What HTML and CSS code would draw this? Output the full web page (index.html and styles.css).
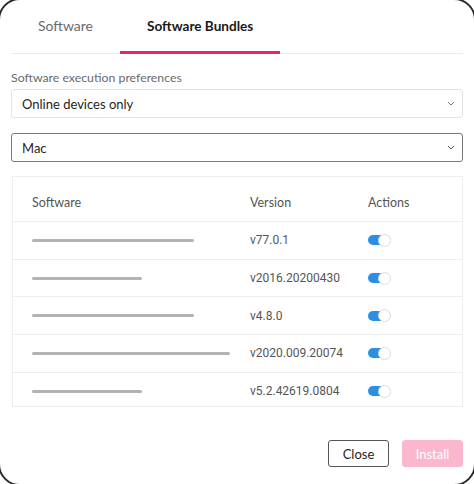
FILE: index.html
```html
<!DOCTYPE html>
<html lang="en">
<head>
<meta charset="utf-8">
<title>Software Bundles</title>
<link rel="stylesheet" href="styles.css">
</head>
<body>
<div class="modal">
  <div class="tabs">
    <div class="tab">Software</div>
    <div class="tab active">Software Bundles</div>
  </div>

  <div class="field-label">Software execution preferences</div>
  <div class="select">
    <span>Online devices only</span>
    <svg class="chev" width="8" height="5" viewBox="0 0 8 5"><path d="M1 1l3 3 3-3" fill="none" stroke="#777" stroke-width="1"/></svg>
  </div>
  <div class="select dark">
    <span>Mac</span>
    <svg class="chev" width="8" height="5" viewBox="0 0 8 5"><path d="M1 1l3 3 3-3" fill="none" stroke="#555" stroke-width="1"/></svg>
  </div>

  <div class="table">
    <div class="row head">
      <div>Software</div>
      <div>Version</div>
      <div>Actions</div>
    </div>
    <div class="row">
      <div><span class="bar" style="width:162px"></span></div>
      <div class="ver">v77.0.1</div>
      <div><span class="toggle"></span></div>
    </div>
    <div class="row">
      <div><span class="bar" style="width:110px"></span></div>
      <div class="ver">v2016.20200430</div>
      <div><span class="toggle"></span></div>
    </div>
    <div class="row">
      <div><span class="bar" style="width:162px"></span></div>
      <div class="ver">v4.8.0</div>
      <div><span class="toggle"></span></div>
    </div>
    <div class="row">
      <div><span class="bar" style="width:198px"></span></div>
      <div class="ver">v2020.009.20074</div>
      <div><span class="toggle"></span></div>
    </div>
    <div class="row">
      <div><span class="bar" style="width:110px"></span></div>
      <div class="ver">v5.2.42619.0804</div>
      <div><span class="toggle"></span></div>
    </div>
  </div>

  <div class="footer">
    <button class="btn">Close</button>
    <button class="btn primary">Install</button>
  </div>
</div>
</body>
</html>
```

FILE: styles.css
```css
html, body {
  margin: 0;
  padding: 0;
  background: #ffffff;
  overflow: hidden;
}

.modal {
  box-sizing: border-box;
  width: 478px;
  height: 488px;
  margin: -2px;
  border: 2px solid #2a2a2a;
  border-radius: 22px;
  background: #fff;
  padding: 0 11px;
  font-family: Lato, "Noto Sans", sans-serif;
  color: #222;
  display: flex;
  flex-direction: column;
}

.tabs {
  display: flex;
  height: 53px;
  border-bottom: 1px solid #ececec;
}

.tab {
  padding: 0 27px 2px;
  display: flex;
  align-items: center;
  font-size: 14px;
  color: #6a6a6a;
  position: relative;
  box-sizing: border-box;
}

.tab.active {
  color: #1a1a1a;
  font-weight: 700;
  font-size: 13.6px;
}

.tab.active::after {
  content: "";
  position: absolute;
  left: 0;
  right: 0;
  bottom: -1px;
  height: 3px;
  background: #ea2467;
}

.field-label {
  margin-top: 16px;
  font-size: 12.3px;
  color: #6a6a6a;
  line-height: 16px;
}

.select {
  margin-top: 3px;
  height: 29px;
  box-sizing: border-box;
  border: 1px solid #e2e2e2;
  border-radius: 3px;
  display: flex;
  align-items: center;
  justify-content: space-between;
  padding: 0 7px 0 10px;
  font-size: 13px;
  color: #1e1e1e;
}

.select.dark {
  margin-top: 15px;
  border-color: #7a7a7a;
}

.chev {
  display: block;
}

.table {
  margin-top: 14px;
  margin-left: 1px;
  height: 231px;
  box-sizing: border-box;
  border: 1px solid #eeeeee;
  overflow: hidden;
}

.row {
  display: grid;
  grid-template-columns: 218px 118px 1fr;
  align-items: center;
  height: 37.7px;
  box-sizing: border-box;
  border-top: 1px solid #eeeeee;
  padding-left: 19px;
}

.row.head {
  border-top: none;
  height: 44px;
  padding-top: 7px;
  font-size: 12.5px;
  color: #555;
}

.bar {
  display: block;
  height: 3px;
  border-radius: 2px;
  background: #b3b3b3;
}

.ver {
  font-family: Roboto, "Liberation Sans", sans-serif;
  font-size: 12px;
  color: #555;
}

.toggle {
  display: block;
  position: relative;
  width: 23px;
  height: 13px;
}

.toggle::before {
  content: "";
  position: absolute;
  left: 0;
  top: 1.5px;
  width: 17px;
  height: 10px;
  border-radius: 5px;
  background: #2b8fe3;
}

.toggle::after {
  content: "";
  position: absolute;
  right: 0;
  top: 0;
  width: 13px;
  height: 13px;
  box-sizing: border-box;
  border-radius: 50%;
  background: #fff;
  border: 1px solid #dcdcdc;
}

.footer {
  margin-top: 33px;
  display: flex;
  justify-content: flex-end;
  gap: 13px;
}

.btn {
  width: 61px;
  height: 27px;
  box-sizing: border-box;
  border-radius: 3px;
  font-family: Lato, "Noto Sans", sans-serif;
  font-size: 13px;
  color: #1e1e1e;
  background: #fff;
  border: 1px solid #555;
  padding: 0;
}

.btn.primary {
  background: #fbb7cd;
  border-color: #fbb7cd;
  color: #ffffff;
}
```
